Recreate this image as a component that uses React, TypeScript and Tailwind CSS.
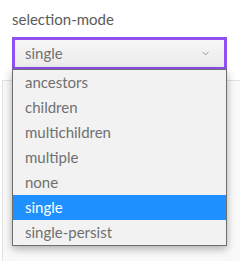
import { ChevronDown } from 'lucide-react';

const OPTIONS = ['ancestors', 'children', 'multichildren', 'multiple', 'none', 'single', 'single-persist'];

export default function App() {
    const selected = 'single';

    return (
        <div className="relative w-[240px] h-[261px] overflow-hidden bg-white font-['Lato','Open_Sans',sans-serif]">
            {/* field label + closed select */}
            <div className="pl-[12px] pt-[10px]">
                <p className="text-[15px] leading-[19px] text-[#5a5a5a]">selection-mode</p>
                <div className="mt-[8px] w-[215px] h-[33px] border-[3px] border-[#9150ef] bg-gradient-to-b from-[#f6f6f6] to-[#ececec] flex items-center justify-between pl-[10px] pr-[13px]">
                    <span className="text-[15px] text-[#707070]">{selected}</span>
                    <ChevronDown className="w-[11px] h-[11px] text-[#808080]" strokeWidth={1.75} />
                </div>
            </div>

            {/* panel behind the popup */}
            <div className="mt-[10px] ml-[2px] h-[200px] border-l border-t border-[#e2e2e2] bg-[#f9f9f9]" />

            {/* open native list */}
            <ul className="absolute left-[12px] top-[69px] w-[215px] border border-[#6f6f6f] bg-[#f2f2f2] shadow-[0_3px_8px_rgba(0,0,0,0.3)]">
                {OPTIONS.map(o => (
                    <li
                        key={o}
                        className={`h-[25px] pl-[12px] pb-[1px] flex items-center text-[15px] ${o === selected ? 'bg-[#1e90ff] text-white' : 'text-[#707070]'}`}
                    >
                        {o}
                    </li>
                ))}
            </ul>
        </div>
    );
}
